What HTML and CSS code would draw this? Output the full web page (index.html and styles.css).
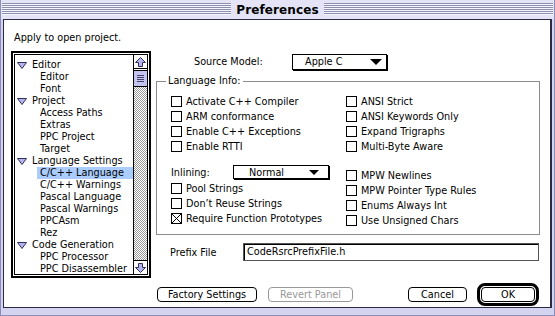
FILE: index.html
```html
<!DOCTYPE html>
<html lang="en">
<head>
    <meta charset="UTF-8">
    <title>Preferences</title>
    <link rel="stylesheet" href="styles.css">
</head>
<body>
    <div class="window">
        <div class="titlebar">
            <div class="stripes"></div>
            <div class="title">Preferences</div>
            <div class="stripes"></div>
        </div>
        <div class="content">
            <div class="apply-note">Apply to open project.</div>

            <div class="main">
                <!-- Panel list -->
                <div class="list-box">
                    <div class="list-inner">
                        <div class="items">
                            <div class="item parent"><svg class="twist" width="10" height="7" viewBox="0 0 10 7"><polygon points="0.5,0.5 9.5,0.5 5,6.5" fill="#b4b4ee" stroke="#30305a"/></svg>Editor</div>
                            <div class="item child">Editor</div>
                            <div class="item child">Font</div>
                            <div class="item parent"><svg class="twist" width="10" height="7" viewBox="0 0 10 7"><polygon points="0.5,0.5 9.5,0.5 5,6.5" fill="#b4b4ee" stroke="#30305a"/></svg>Project</div>
                            <div class="item child">Access Paths</div>
                            <div class="item child">Extras</div>
                            <div class="item child">PPC Project</div>
                            <div class="item child">Target</div>
                            <div class="item parent"><svg class="twist" width="10" height="7" viewBox="0 0 10 7"><polygon points="0.5,0.5 9.5,0.5 5,6.5" fill="#b4b4ee" stroke="#30305a"/></svg>Language Settings</div>
                            <div class="item child selected">C/C++ Language</div>
                            <div class="item child">C/C++ Warnings</div>
                            <div class="item child">Pascal Language</div>
                            <div class="item child">Pascal Warnings</div>
                            <div class="item child">PPCAsm</div>
                            <div class="item child">Rez</div>
                            <div class="item parent"><svg class="twist" width="10" height="7" viewBox="0 0 10 7"><polygon points="0.5,0.5 9.5,0.5 5,6.5" fill="#b4b4ee" stroke="#30305a"/></svg>Code Generation</div>
                            <div class="item child">PPC Processor</div>
                            <div class="item child">PPC Disassembler</div>
                        </div>
                        <div class="scrollbar">
                            <div class="scroll-btn up"><svg width="11" height="10" viewBox="0 0 11 10"><polygon points="5.5,0.5 10.5,5.5 7.5,5.5 7.5,9.5 3.5,9.5 3.5,5.5 0.5,5.5" fill="#b4b4ee" stroke="#30305a"/></svg></div>
                            <div class="thumb"><span></span><span></span><span></span><span></span></div>
                            <div class="track"></div>
                            <div class="scroll-btn down"><svg width="11" height="10" viewBox="0 0 11 10"><polygon points="3.5,0.5 7.5,0.5 7.5,4.5 10.5,4.5 5.5,9.5 0.5,4.5 3.5,4.5" fill="#b4b4ee" stroke="#30305a"/></svg></div>
                        </div>
                    </div>
                </div>

                <!-- Settings panel -->
                <div class="panel">
                    <div class="source-row">
                        <span class="source-label">Source Model:</span>
                        <div class="popup source-popup">
                            <span>Apple C</span>
                            <span class="popup-arrow"></span>
                        </div>
                    </div>

                    <div class="group">
                        <div class="group-title">Language Info:</div>
                        <div class="columns">
                            <div class="col">
                                <div class="check"><span class="box"></span>Activate C++ Compiler</div>
                                <div class="check"><span class="box"></span>ARM conformance</div>
                                <div class="check"><span class="box"></span>Enable C++ Exceptions</div>
                                <div class="check"><span class="box"></span>Enable RTTI</div>
                                <div class="inline-row">
                                    <span class="inline-label">Inlining:</span>
                                    <div class="popup inline-popup">
                                        <span>Normal</span>
                                        <span class="popup-arrow"></span>
                                    </div>
                                </div>
                                <div class="check"><span class="box"></span>Pool Strings</div>
                                <div class="check"><span class="box"></span>Don’t Reuse Strings</div>
                                <div class="check"><span class="box checked"><svg width="11" height="11" viewBox="0 0 11 11"><path d="M1 1 L10 10 M10 1 L1 10" stroke="#000" stroke-width="1"/></svg></span>Require Function Prototypes</div>
                            </div>
                            <div class="col">
                                <div class="check"><span class="box"></span>ANSI Strict</div>
                                <div class="check"><span class="box"></span>ANSI Keywords Only</div>
                                <div class="check"><span class="box"></span>Expand Trigraphs</div>
                                <div class="check"><span class="box"></span>Multi-Byte Aware</div>
                                <div class="check spaced"><span class="box"></span>MPW Newlines</div>
                                <div class="check"><span class="box"></span>MPW Pointer Type Rules</div>
                                <div class="check"><span class="box"></span>Enums Always Int</div>
                                <div class="check"><span class="box"></span>Use Unsigned Chars</div>
                            </div>
                        </div>
                    </div>

                    <div class="prefix-row">
                        <span class="prefix-label">Prefix File</span>
                        <div class="field">CodeRsrcPrefixFile.h</div>
                    </div>
                </div>
            </div>

            <div class="buttons">
                <div class="btn factory">Factory Settings</div>
                <div class="btn revert">Revert Panel</div>
                <div class="btn cancel">Cancel</div>
                <div class="default-ring">
                    <div class="btn ok">OK</div>
                </div>
            </div>
        </div>
    </div>
</body>
</html>
```

FILE: styles.css
```css
:root {
    --frame: #d4d4f0;
    --frame-dark: #8c8cb8;
    --edge: #2a2a44;
    --lavender: #c4c4f0;
    --highlight: #aaccff;
}

* {
    box-sizing: border-box;
}

body {
    margin: 0;
    font-family: "DejaVu Sans", sans-serif;
    font-size: 9.7px;
    color: #000;
    background: #fff;
}

.window {
    width: 555px;
    height: 316px;
    background: var(--frame);
    border: 1px solid var(--frame-dark);
    border-top: none;
}

/* Title bar */
.titlebar {
    height: 19px;
    display: flex;
    align-items: center;
    padding: 0 1px;
    background: #e4e4f6;
}

.stripes {
    flex: 1;
    height: 12px;
    margin-bottom: 2px;
    background: repeating-linear-gradient(
        to bottom,
        #8e8eae 0 1px,
        #f6f6ff 1px 2px
    );
}

.title {
    padding: 0 5px;
    font-weight: bold;
    font-size: 12px;
    letter-spacing: 0.1px;
}

.content {
    height: 289px;
    margin: 0 2px 0 2px;
    background: #fff;
    border: 1px solid var(--edge);
    border-right-width: 2px;
    padding: 12px 0 0 7px;
}

.apply-note {
    padding-left: 3px;
    line-height: 12px;
}

.main {
    display: flex;
    margin-top: 7px;
}

/* List */
.list-box {
    flex: none;
    width: 140px;
    height: 227px;
    border: 2px solid #000;
    padding: 1px;
}

.list-inner {
    height: 100%;
    border: 1px solid #000;
    display: flex;
}

.items {
    flex: 1;
    padding-top: 4px;
    overflow: hidden;
}

.item {
    height: 12px;
    line-height: 12px;
    white-space: nowrap;
}

.item.parent {
    display: flex;
    align-items: center;
    padding-left: 2px;
}

.twist {
    margin-right: 5px;
}

.item.child {
    margin-left: 22px;
    padding-left: 3px;
}

.item.selected {
    background: var(--highlight);
}

.scrollbar {
    width: 14px;
    border-left: 1px solid #000;
    display: flex;
    flex-direction: column;
}

.scroll-btn {
    height: 14px;
    display: flex;
    align-items: center;
    justify-content: center;
    background: #fff;
}

.scroll-btn.up {
    border-bottom: 1px solid #000;
}

.scroll-btn.down {
    border-top: 1px solid #000;
}

.thumb {
    height: 17px;
    margin-top: 1px;
    border-top: 1px solid #000;
    border-bottom: 1px solid #000;
    background: var(--lavender);
    display: flex;
    flex-direction: column;
    justify-content: center;
    align-items: center;
    gap: 1px;
}

.thumb span {
    width: 7px;
    height: 1px;
    background: #44446a;
}

.track {
    flex: 1;
    background: repeating-conic-gradient(#9a9a9a 0 25%, #fff 0 50%) 0 0 / 2px 2px;
}

/* Settings panel */
.panel {
    flex: none;
    width: 384px;
    margin-left: 5px;
    padding-top: 2px;
}

.source-row {
    display: flex;
    align-items: center;
    padding-left: 38px;
    height: 17px;
}

.source-label {
    width: 98px;
}

.popup {
    display: flex;
    align-items: center;
    justify-content: space-between;
    border: 1px solid #000;
    box-shadow: 1px 1px 0 #000;
    background: #fff;
}

.source-popup {
    width: 95px;
    height: 16px;
    padding: 0 4px 0 12px;
}

.popup-arrow {
    width: 0;
    height: 0;
    border-left: 6px solid transparent;
    border-right: 6px solid transparent;
    border-top: 6px solid #000;
}

.group {
    height: 154px;
    margin-top: 11px;
    border: 1px solid #8c8c8c;
    padding-left: 14px;
}

.group-title {
    width: fit-content;
    margin: -7px 0 0 -5px;
    padding: 0 2px;
    line-height: 12px;
    background: #fff;
}

.columns {
    display: grid;
    grid-template-columns: 175px 1fr;
    margin-top: 7px;
}

.check {
    display: flex;
    align-items: center;
    gap: 4px;
    height: 15px;
    white-space: nowrap;
}

.check.spaced {
    margin-top: 14px;
}

.box {
    width: 11px;
    height: 11px;
    border: 1px solid #000;
    background: #fff;
    flex: none;
}

.box svg {
    display: block;
    margin: -1px;
}

.inline-row {
    display: flex;
    align-items: center;
    height: 16px;
    margin-top: 10px;
    margin-bottom: 1px;
}

.inline-label {
    width: 62px;
}

.inline-popup {
    width: 96px;
    height: 14px;
    padding: 0 9px 0 15px;
}

.inline-popup .popup-arrow {
    border-left-width: 5px;
    border-right-width: 5px;
    border-top-width: 5px;
}

.prefix-row {
    display: flex;
    align-items: center;
    margin-top: 8px;
    padding: 0 1px 0 14px;
}

.prefix-label {
    flex: none;
    width: 73px;
}

.field {
    flex: 1;
    height: 18px;
    line-height: 16px;
    border: 1px solid #555;
    box-shadow: inset 1px 1px 0 #000;
    padding-left: 3px;
}

/* Buttons */
.buttons {
    display: flex;
    align-items: center;
    height: 23px;
    margin-top: 5px;
    padding: 0 11px 0 146px;
}

.btn {
    height: 15px;
    line-height: 13px;
    border: 1px solid #000;
    border-radius: 4px;
    text-align: center;
    background: #fff;
}

.factory {
    width: 100px;
}

.revert {
    width: 85px;
    margin-left: 11px;
    color: #999;
    border-color: #999;
}

.cancel {
    width: 59px;
    margin-left: auto;
}

.default-ring {
    margin-left: 10px;
    border: 3px solid #000;
    border-radius: 8px;
    padding: 1px;
}

.ok {
    width: 54px;
}
```
